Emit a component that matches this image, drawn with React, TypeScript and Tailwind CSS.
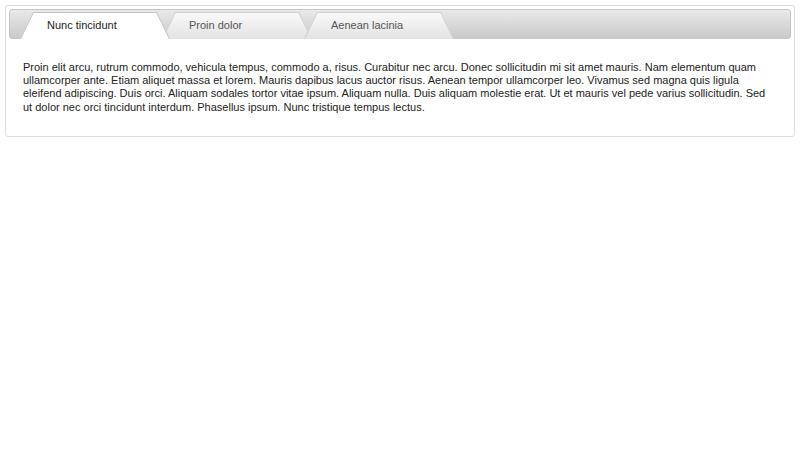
import React, { useState } from 'react';

const tabs = [
    {
        id: 'nunc',
        label: 'Nunc tincidunt',
        body: 'Proin elit arcu, rutrum commodo, vehicula tempus, commodo a, risus. Curabitur nec arcu. Donec sollicitudin mi sit amet mauris. Nam elementum quam ullamcorper ante. Etiam aliquet massa et lorem. Mauris dapibus lacus auctor risus. Aenean tempor ullamcorper leo. Vivamus sed magna quis ligula eleifend adipiscing. Duis orci. Aliquam sodales tortor vitae ipsum. Aliquam nulla. Duis aliquam molestie erat. Ut et mauris vel pede varius sollicitudin. Sed ut dolor nec orci tincidunt interdum. Phasellus ipsum. Nunc tristique tempus lectus.'
    },
    {
        id: 'proin',
        label: 'Proin dolor',
        body: 'Morbi tincidunt, dui sit amet facilisis feugiat, odio metus gravida ante, ut pharetra massa metus id nunc. Duis scelerisque molestie turpis.'
    },
    {
        id: 'aenean',
        label: 'Aenean lacinia',
        body: 'Mauris eleifend est et turpis. Duis id erat. Suspendisse potenti. Aliquam vulputate, pede vel vehicula accumsan, mi neque rutrum erat, eu congue orci lorem eget lorem.'
    }
];

// Forma trapezoidal da aba (desenho de fundo)
const TabShape = ({ active, id }: { active: boolean; id: string }) => (
    <svg
        className="absolute inset-0 w-full h-full"
        viewBox="0 0 150 26"
        preserveAspectRatio="none"
    >
        <defs>
            <linearGradient id={`g-${id}`} x1="0" y1="0" x2="0" y2="1">
                <stop offset="0" stopColor={active ? '#ffffff' : '#fafafa'} />
                <stop offset="1" stopColor={active ? '#ffffff' : '#e3e3e3'} />
            </linearGradient>
        </defs>
        <polygon points="0,26 13,0 137,0 150,26" fill={`url(#g-${id})`} />
        <polyline
            points="0.5,26 13.3,0.5 136.7,0.5 149.5,26"
            fill="none"
            stroke={active ? '#c4c4c4' : '#cfcfcf'}
            strokeWidth="1"
        />
    </svg>
);

const App: React.FC = () => {
    const [selected, setSelected] = useState('nunc');
    const current = tabs.find(t => t.id === selected)!;

    return (
        <div className="p-[5px] bg-white" style={{ fontFamily: '"Liberation Sans", Arial, sans-serif' }}>
            <div className="border border-[#dddddd] rounded-[3px] bg-white p-[3px]">
                {/* Barra de abas */}
                <div className="h-[30px] border border-[#c6c6c6] rounded-[3px] bg-gradient-to-b from-[#e9e9e9] to-[#c9c9c9] pt-[2px] pl-[10px] flex items-end">
                    {tabs.map((tab, i) => {
                        const active = tab.id === selected;
                        return (
                            <button
                                key={tab.id}
                                onClick={() => setSelected(tab.id)}
                                className={`relative w-[150px] h-[27px] -mb-px shrink-0 text-left pl-[27px] text-[11px] ${i > 0 ? '-ml-[8px]' : ''} ${active ? 'z-20 text-[#222222]' : 'z-0 text-[#555555]'}`}
                            >
                                <TabShape active={active} id={tab.id} />
                                <span className="relative">{tab.label}</span>
                            </button>
                        );
                    })}
                </div>

                {/* Conteúdo */}
                <div className="pt-[22px] pb-[19px] px-[14px]">
                    <p className="text-[11px] leading-[1.2] text-[#222222]">{current.body}</p>
                </div>
            </div>
        </div>
    );
};

export default App;
